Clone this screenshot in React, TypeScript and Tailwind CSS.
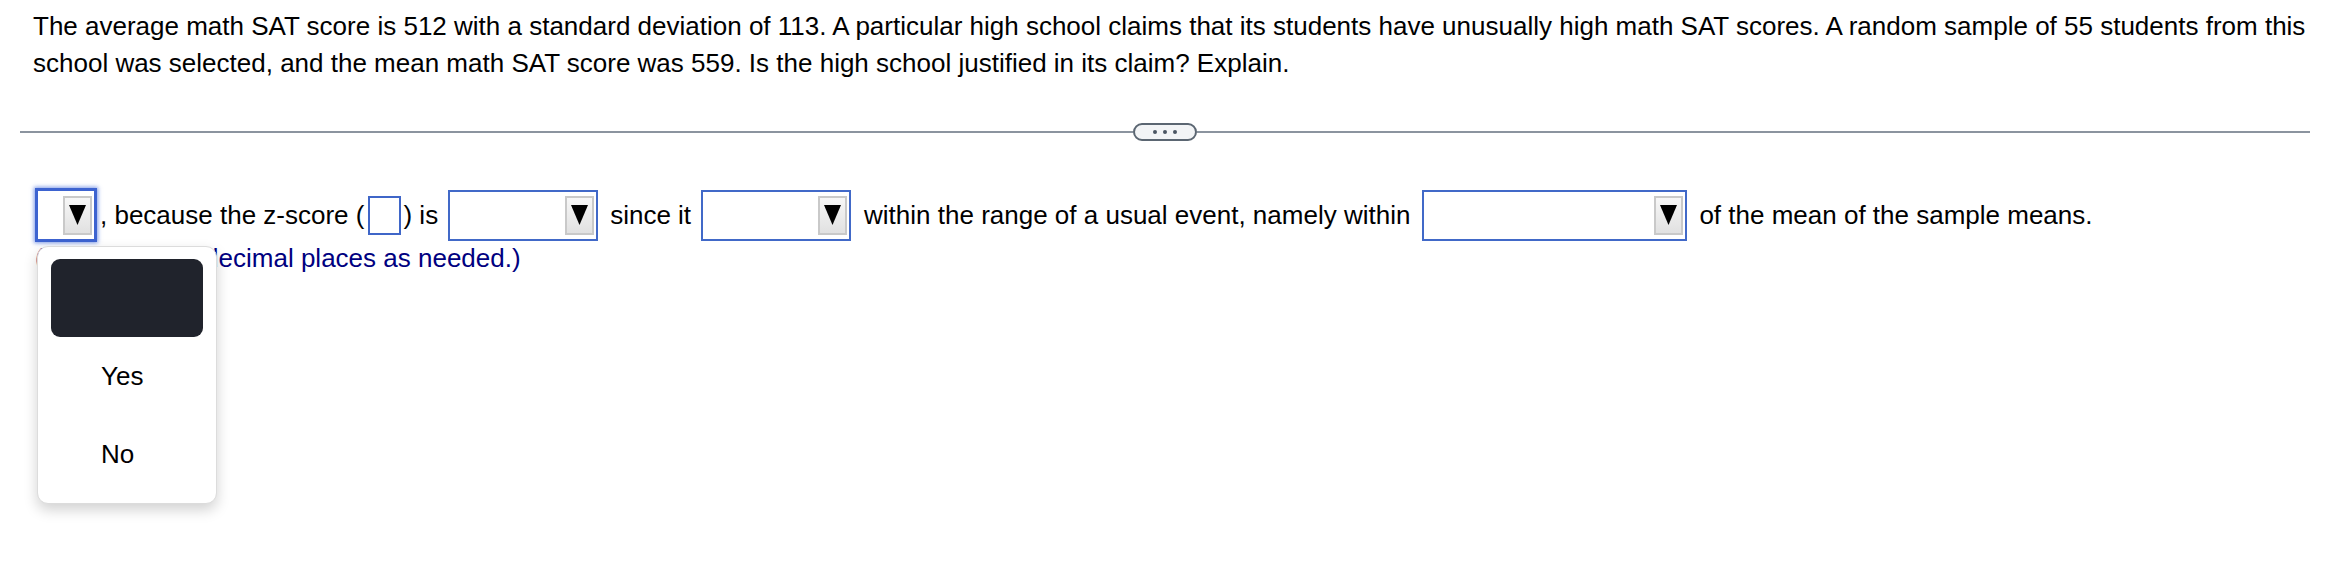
import React from 'react';

const font = { fontFamily: '"Liberation Sans", Arial, Helvetica, sans-serif' };

const Arrow = () => (
  <span className="flex h-[39px] w-[29px] items-center justify-center border-2 border-[#c9c9c9] bg-gradient-to-b from-[#f7f7f7] to-[#e1e1e1]">
    <svg width="19" height="22" viewBox="0 0 19 22">
      <polygon points="1,1 18,1 9.5,21" fill="#000" />
    </svg>
  </span>
);

interface SelectProps {
  width: string;
  focused?: boolean;
}

const SelectBox = ({ width, focused }: SelectProps) => (
  <span
    className={
      focused
        ? `inline-flex h-[54px] ${width} items-center justify-end border-[3px] border-[#3d63d0] bg-white pr-[2px] shadow-[0_0_4px_1px_rgba(70,110,220,0.7)]`
        : `inline-flex h-[51px] ${width} items-center justify-end border-2 border-[#4169c8] bg-white pr-[2px]`
    }
  >
    <Arrow />
  </span>
);

const MenuItem = ({ label, active }: { label?: string; active?: boolean }) => (
  <div
    className={
      active
        ? 'h-[78px] rounded-[9px] bg-[#20232c]'
        : 'flex h-[78px] items-center pl-[50px] text-[26px] text-black'
    }
  >
    {label}
  </div>
);

export default function App() {
  return (
    <div className="min-h-[574px] w-[2330px] bg-white text-black" style={font}>
      <p className="pl-[33px] pr-[16px] pt-[8px] text-[26px] leading-[37px]">
        The average math SAT score is 512 with a standard deviation of 113. A particular high school claims that its
        students have unusually high math SAT scores. A random sample of 55 students from this school was selected, and
        the mean math SAT score was 559. Is the high school justified in its claim? Explain.
      </p>

      <div className="mx-[20px] mt-[41px] flex items-center">
        <div className="h-[2px] flex-1 bg-[#8b949f]" />
        <div className="flex h-[18px] w-[64px] items-center justify-center gap-[6px] rounded-full border-2 border-[#5b6672] bg-[#f2f4f6]">
          <span className="h-[4px] w-[4px] rounded-full bg-[#4b5563]" />
          <span className="h-[4px] w-[4px] rounded-full bg-[#4b5563]" />
          <span className="h-[4px] w-[4px] rounded-full bg-[#4b5563]" />
        </div>
        <div className="h-[2px] flex-1 bg-[#8b949f]" />
      </div>

      <div className="mt-[47px] px-[35px] text-[26px]">
        <div className="flex items-center whitespace-pre">
          <div className="relative">
            <SelectBox width="w-[62px]" focused />
            <div className="absolute left-[2px] top-[58px] z-10 w-[180px] rounded-[11px] border border-[#dcdcdc] bg-white px-[13px] pb-[10px] pt-[12px] shadow-[0_6px_14px_rgba(0,0,0,0.18)]">
              <MenuItem active />
              <MenuItem label="Yes" />
              <MenuItem label="No" />
            </div>
          </div>
          <span className="ml-[3px]">, because the z-score (</span>
          <span className="ml-[4px] mr-[2px] inline-block h-[39px] w-[33px] border-2 border-[#3f66c8]" />
          <span>) is</span>
          <span className="ml-[10px] mr-[12px]">
            <SelectBox width="w-[150px]" />
          </span>
          <span>since it</span>
          <span className="ml-[10px] mr-[13px]">
            <SelectBox width="w-[150px]" />
          </span>
          <span>within the range of a usual event, namely within</span>
          <span className="ml-[12px] mr-[12px]">
            <SelectBox width="w-[265px]" />
          </span>
          <span>of the mean of the sample means.</span>
        </div>
        <p className="leading-[33px] text-[#000080]">(Round to two decimal places as needed.)</p>
      </div>
    </div>
  );
}
